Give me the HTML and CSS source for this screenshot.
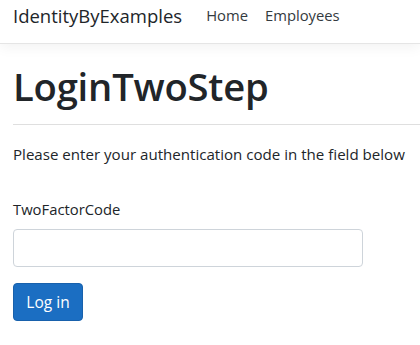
FILE: index.html
```html
<!DOCTYPE html>
<html>
<head>
<meta charset="utf-8">
<link rel="stylesheet" href="styles.css">
</head>
<body>
<header class="navbar">
  <a class="brand" href="#">IdentityByExamples</a>
  <nav class="nav">
    <a class="nav-link" href="#">Home</a>
    <a class="nav-link" href="#">Employees</a>
  </nav>
</header>
<main class="main">
  <h1 class="title">LoginTwoStep</h1>
  <hr class="rule">
  <p class="intro">Please enter your authentication code in the field below</p>
  <form class="form">
    <div class="group">
      <label class="label" for="code">TwoFactorCode</label>
      <input class="input" id="code" type="text">
    </div>
    <button class="btn" type="button">Log in</button>
  </form>
</main>
</body>
</html>
```
FILE: styles.css
```css
* { box-sizing: border-box; }
html, body { margin: 0; padding: 0; background: #fff; }
body {
  font-family: "Open Sans", "Noto Sans", sans-serif;
  font-size: 14.8px;
  color: #212529;
  overflow: hidden;
}
.navbar {
  display: flex;
  align-items: flex-start;
  height: 44px;
  padding: 0 13px;
  border-bottom: 1px solid #e5e5e5;
  box-shadow: 0 4px 12px rgba(0,0,0,.05);
}
.brand {
  font-size: 18.5px;
  line-height: 24px;
  margin-top: 4px;
  color: #212529;
  text-decoration: none;
  margin-right: 24px;
}
.nav { display: flex; gap: 17px; margin-top: 3px; }
.nav-link {
  color: #343a40;
  text-decoration: none;
  font-size: 14.8px;
  line-height: 24px;
}
.main { padding: 0 13px; }
.title {
  margin: 18px 0 0;
  font-size: 38.2px;
  font-weight: 600;
  line-height: 48px;
  letter-spacing: -0.2px;
}
.rule {
  margin: 14px -13px 0 0;
  border: 0;
  border-top: 1px solid #dfdfdf;
}
.intro { margin: 17px 0 0; line-height: 24px; font-size: 15.1px; }
.form { margin-top: 31px; }
.group { display: flex; flex-direction: column; align-items: flex-start; }
.label { line-height: 24px; margin-bottom: 8px; }
.input {
  width: 350px;
  height: 38px;
  border: 1px solid #ced4da;
  border-radius: 4px;
  font: inherit;
  padding: 6px 12px;
}
.btn {
  margin-top: 16px;
  height: 38px;
  width: 70px;
  background: #1b6ec2;
  border: 1px solid #1861ac;
  border-radius: 4px;
  color: #fff;
  font: inherit;
  font-size: 15.5px;
  padding: 0;
}
```
